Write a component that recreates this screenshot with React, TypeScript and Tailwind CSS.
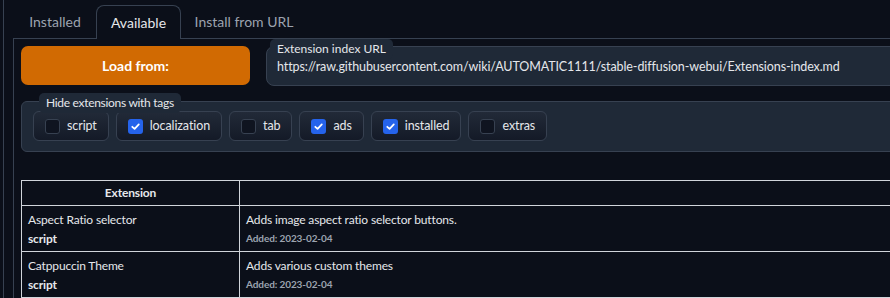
import React from "react";

const font = { fontFamily: "Lato, 'Noto Sans', sans-serif" };

function Check({ checked }: { checked: boolean }) {
  return checked ? (
    <span className="flex h-[15px] w-[15px] items-center justify-center rounded-[3px] bg-[#2563eb]">
      <svg width="11" height="11" viewBox="0 0 12 12" fill="none">
        <path d="M2.5 6.3 L5 8.6 L9.6 3.6" stroke="white" strokeWidth="1.9" strokeLinecap="round" strokeLinejoin="round" />
      </svg>
    </span>
  ) : (
    <span className="h-[15px] w-[15px] rounded-[3px] border border-[#374151] bg-[#0f1420]" />
  );
}

function Tag({ label, checked }: { label: string; checked: boolean }) {
  return (
    <div className="flex h-[30px] items-center gap-[7px] rounded-[6px] border border-[#374151] bg-gradient-to-b from-[#222a38] to-[#141a27] px-[11px] text-[12.5px] tracking-[-0.1px] text-[#e5e7eb]">
      <Check checked={checked} />
      <span>{label}</span>
    </div>
  );
}

export default function App() {
  return (
    <div className="h-[298px] w-[890px] overflow-hidden bg-[#0b0f19] pl-[3px]" style={font}>
      <div className="h-full border-l border-[#374151] pl-[9px]">
        {/* tabs */}
        <div className="flex h-[38px] items-end pl-[1px] text-[14px]">
          <div className="flex h-[33px] w-[82px] items-center justify-center text-[#9ca3af]">Installed</div>
          <div className="relative top-[1px] flex h-[34px] w-[85px] items-center justify-center rounded-t-[8px] border border-b-0 border-[#374151] bg-[#0b0f19] text-[#e5e7eb]">
            Available
          </div>
          <div className="flex h-[33px] w-[126px] items-center justify-center text-[#9ca3af]">Install from URL</div>
        </div>
        {/* panel */}
        <div className="h-[400px] w-[1000px] border-l border-t border-[#374151] pl-[7px] pt-[7px]">
          <div className="flex gap-[16px]">
            <button className="h-[39px] w-[229px] rounded-[7px] bg-[#d16a02] text-[14px] font-bold text-white">
              Load from:
            </button>
            <div className="relative h-[40px] flex-1 rounded-[8px] border border-[#374151] bg-[#1f2937]">
              <span className="absolute left-[3px] top-[-8px] rounded-[5px] bg-[#1f2937] px-[7px] py-[1px] text-[12px] text-[#e5e7eb]">
                Extension index URL
              </span>
              <div className="pl-[10px] pt-[11px] text-[12.5px] leading-[18px] tracking-[-0.1px] text-[#e5e7eb]">
                https://raw.githubusercontent.com/wiki/AUTOMATIC1111/stable-diffusion-webui/Extensions-index.md
              </div>
            </div>
          </div>
          {/* group */}
          <div className="relative mt-[15px] flex h-[51px] gap-[7px] rounded-[6px] border border-[#374151] bg-[#1f2937] pl-[11px] pt-[9px]">
            <span className="absolute left-[17px] top-[-9px] rounded-[5px] bg-[#1f2937] px-[7px] py-[1px] text-[12px] tracking-[-0.3px] text-[#e5e7eb]">
              Hide extensions with tags
            </span>
            <Tag label="script" checked={false} />
            <Tag label="localization" checked={true} />
            <Tag label="tab" checked={false} />
            <Tag label="ads" checked={true} />
            <Tag label="installed" checked={true} />
            <Tag label="extras" checked={false} />
          </div>
          {/* table */}
          <table className="mt-[28px] w-[900px] border-collapse text-[12px] tracking-[-0.15px] text-[#e5e7eb]">
            <thead>
              <tr className="h-[25px]">
                <th className="w-[218px] border border-[#d1d5db] font-bold">Extension</th>
                <th className="border border-[#d1d5db]"></th>
              </tr>
            </thead>
            <tbody>
              {[
                ["Aspect Ratio selector", "Adds image aspect ratio selector buttons."],
                ["Catppuccin Theme", "Adds various custom themes"],
              ].map(([n, d]) => (
                <tr key={n} className="h-[46px]">
                  <td className="border border-[#d1d5db] px-[6px] align-top pt-[4px] leading-[19px]">
                    <div>{n}</div>
                    <div className="font-bold">script</div>
                  </td>
                  <td className="border border-[#d1d5db] px-[6px] align-top pt-[4px] leading-[19px]">
                    <div>{d}</div>
                    <div className="text-[10px] font-bold tracking-[-0.1px] text-[#9ca3af]">Added: 2023-02-04</div>
                  </td>
                </tr>
              ))}
            </tbody>
          </table>
        </div>
      </div>
    </div>
  );
}
